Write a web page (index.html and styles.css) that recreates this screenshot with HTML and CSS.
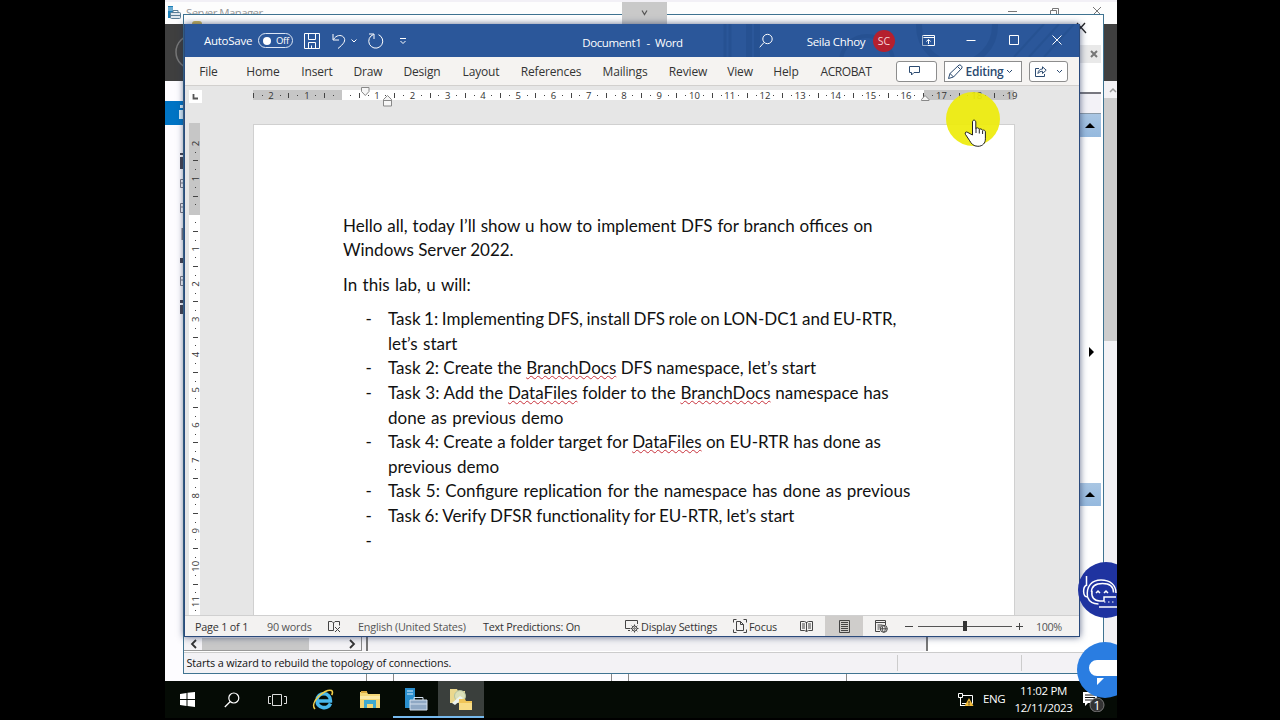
FILE: index.html
```html
<!DOCTYPE html>
<html lang="en">
<head>
<meta charset="utf-8">
<title>Document1 - Word</title>
<link rel="stylesheet" href="styles.css">
</head>
<body>
<div class="desktop">

  <div class="manager">
    <div class="manager-title">
      <svg width="14" height="14" viewBox="0 0 14 14"><path d="M1 0h5v12H1z" fill="#1b7fb8"/><path d="M1 2h5M1 4h5" stroke="#fff" stroke-width=".7"/><rect x="3.500" y="6.500" width="10" height="6" rx="1" fill="#dfe7ee" stroke="#5a7d95"/><path d="M6 6V4.500h5V6M3.500 9.500h10" stroke="#5a7d95" fill="none"/></svg>
      <span class="manager-name">Server Manager</span>
      <svg class="manager-controls" width="100" height="14" viewBox="0 0 100 14" fill="none" stroke="#777"><path d="M5 5.500h9M47.500 4.500h6v6h-6zM49.500 4.500v-2h6v6h-2M90 1l8 8M98 1l-8 8"/></svg>
    </div>
    <div class="manager-band"><svg width="60" height="57" viewBox="0 0 60 57"><circle cx="28" cy="28" r="17" fill="none" stroke="#777" stroke-width="1.500"/></svg></div>
    <div class="manager-body">
      <div class="manager-nav">
        <div class="nav-active"><svg width="19" height="24" viewBox="0 0 19 24"><path d="M15 4h4v3h-4zM14 9h5v9h-5z" fill="#d5ecfa"/></svg></div>
        <svg width="19" height="200" viewBox="0 0 19 200"><g fill="#454552"><path d="M15 28h4v2h-4zM15 32h4v12h-4zM15 133h4v5h-4zM15 175h4v3h-4zM15 180h4v9h-4z"/><path d="M16.500 103h2.500v12h-2.500z" opacity=".7"/></g><g fill="none" stroke="#777785"><path d="M19 54.500h-3.500v8H19M19 78.500h-3.500v9H19M19 151.500h-3.500v9H19M16 82h3M16 58h3M16 155h3"/></g></svg>
      </div>
      <div class="manager-scroll"><svg width="13" height="17" viewBox="0 0 13 17"><path d="M6 11l3-3 3 3" stroke="#999" fill="none" stroke-width="1.500"/></svg><div class="thumb"></div></div>
    </div>
  </div>

  <div class="console">
    <div class="console-icon"></div>
    <div class="console-side">
      <svg width="24" height="26" viewBox="0 0 24 26"><path d="M-2 8L7 18M6 8L-3 18" stroke="#222" stroke-width="1.300"/></svg>
      <div class="side-close"><svg width="8" height="8" viewBox="0 0 8 8"><path d="M1 1l6 6M7 1L1 7" stroke="#777" stroke-width="2"/></svg></div>
      <div class="side-gap"></div>
      <div class="side-rule"></div>
      <div class="side-head"><i class="up"></i></div>
      <div class="side-list"><i class="right"></i></div>
      <div class="side-head"><i class="up"></i></div>
    </div>
    <div class="console-bottom">
      <div class="hscroll"><svg width="18" height="12" viewBox="0 0 18 12"><path d="M12 2L8 6l4 4" fill="none" stroke="#333" stroke-width="1.800"/></svg><span class="hthumb"></span><svg width="18" height="12" viewBox="0 0 18 12"><path d="M7 2l4 4-4 4" fill="none" stroke="#333" stroke-width="1.800"/></svg></div>
      <div class="pane"></div>
      <div class="pane-last"></div>
    </div>
    <div class="console-status"><span class="hint">Starts a wizard to rebuild the topology of connections.</span><span class="cell"></span><span class="cell"></span></div>
  </div>
  <div class="pane-ends"><i></i><i></i><i></i><i></i><i></i></div>
  <div class="session-tab"><svg width="7" height="6" viewBox="0 0 7 6"><path d="M1 .5l2.500 4L6 .5" fill="none" stroke="#555" stroke-width="1.200"/></svg></div>

  <div class="word">
    <div class="titlebar">
      <svg class="title-art" width="380" height="33" viewBox="0 0 380 33" fill="none" stroke="#204a87"><g opacity=".4"><path d="M26 0v33M31 0v33" stroke-width="3"/><path d="M50 0v33M58 0v33" stroke-width="6"/><circle cx="168" cy="38" r="26" stroke-width="4"/><circle cx="258" cy="2" r="38" stroke-width="6"/><path d="M315 33l30-33M330 33l30-33M345 33l30-33" stroke-width="2"/></g></svg>
      <span class="autosave">AutoSave</span>
      <span class="toggle"><i></i>Off</span>
      <svg width="16" height="16" viewBox="0 0 16 16"><path d="M.5.500h15v15H.500zM4.500.500v6h7v-6M4.500 15.500v-6h7v6M7.500 15.500v-3" /></svg>
      <svg width="14" height="16" viewBox="0 0 14 16"><path d="M1 1v6h6M1.500 6.500C4 2 9 1.500 11.500 4c3 3.500 0 7-5.500 11.500"/></svg>
      <svg width="8" height="8" viewBox="0 0 8 8"><path d="M1.500 2.500L4 5l2.500-2.500"/></svg>
      <svg width="16" height="16" viewBox="0 0 16 16"><path d="M1 1h5v5M10.500 1.700a7 7 0 1 1-7.500 1.300L5.500 1.500"/></svg>
      <svg width="8" height="8" viewBox="0 0 8 8"><path d="M1 1.500h6M1.500 4L4 6.500 6.500 4"/></svg>
      <span></span>
      <span class="doc-name">Document1&nbsp; -&nbsp; Word</span>
      <svg width="14" height="16" viewBox="0 0 14 16"><circle cx="8.500" cy="6" r="4.700"/><path d="M5 9.500L.5 14.500"/></svg>
      <span></span>
      <span class="user">Seila Chhoy</span>
      <span class="avatar">SC</span>
      <svg width="13" height="11" viewBox="0 0 13 11"><path d="M.5.500h12v10H.500zM.500 2.500h12M6.500 9V4.500M4.300 6.500l2.200-2 2.200 2"/></svg>
      <svg width="10" height="11" viewBox="0 0 10 11"><path d="M.5 5.500h9"/></svg>
      <svg width="10" height="11" viewBox="0 0 10 11"><path d="M.5.500h9v9h-9z"/></svg>
      <svg width="10" height="11" viewBox="0 0 10 11"><path d="M.5.500l9 9M9.500.500l-9 9"/></svg>
    </div>

    <div class="tabs">
      <span>File</span><span>Home</span><span>Insert</span><span>Draw</span><span>Design</span><span>Layout</span><span>References</span><span>Mailings</span><span>Review</span><span>View</span><span>Help</span><span class="acrobat">ACROBAT</span>
      <div class="actions">
        <div class="btn comment"><svg width="11" height="10" viewBox="0 0 11 10"><path d="M.5.500h10v6H5L2.500 9V6.500h-2z"/></svg></div>
        <div class="btn editing"><svg width="15" height="15" viewBox="0 0 15 15"><path d="M.5 14.500l1.500-5L11 1c1-.8 3.800 1.500 3 3l-8.500 9zM2 9.500l3.500 3.500M9.500 2.500l3.200 3.200"/></svg><span>Editing</span><svg width="7" height="7" viewBox="0 0 7 7"><path d="M1 2l2.500 2.500L6 2"/></svg></div>
        <div class="btn share"><svg width="12" height="11" viewBox="0 0 12 11"><path d="M4 2.500H.500v8h9V8M3 7.500c0-3 2-4.500 4.500-4.500V.800l3.700 3.400-3.700 3.300V5.300C5.500 5.300 4 6 3 7.500z"/></svg><svg width="7" height="7" viewBox="0 0 7 7"><path d="M1 2l2.500 2.500L6 2"/></svg></div>
      </div>
    </div>

    <div class="ruler-row">
      <div class="corner"><svg width="13" height="13" viewBox="0 0 13 13"><path d="M4.500 4v4.500H9" fill="none" stroke="#555" stroke-width="1.800"/></svg></div>
      <svg class="hruler" width="768" height="24" viewBox="0 0 768 24">
        <path d="M0 0h761v10H0z" fill="#c6c6c6"/><path d="M89 0h582v10H89z" fill="#fff"/>
        <g class="marks"><path d="M.200 5H752" stroke-width="5" stroke-dasharray="1 34.270"/><path d="M9 5.500H752" stroke-dasharray="1 16.635"/></g>
        <g class="nums">
          <text x="18" y="8.500">2</text><text x="54" y="8.500">1</text><text x="124" y="8.500">1</text><text x="159.400" y="8.500">2</text><text x="194.600" y="8.500">3</text><text x="229.900" y="8.500">4</text><text x="265.200" y="8.500">5</text><text x="300.400" y="8.500">6</text><text x="335.700" y="8.500">7</text><text x="371" y="8.500">8</text><text x="406.200" y="8.500">9</text><text x="441.500" y="8.500">10</text><text x="476.800" y="8.500">11</text><text x="512" y="8.500">12</text><text x="547.300" y="8.500">13</text><text x="582.600" y="8.500">14</text><text x="617.800" y="8.500">15</text><text x="653" y="8.500">16</text><text x="688.400" y="8.500">17</text><text x="723.700" y="8.500">18</text><text x="759" y="8.500">19</text>
        </g>
        <g fill="#f6f6f6" stroke="#888"><path d="M108.500-2.500h7.500v4l-3.700 4-3.800-4z"/><path d="M130.500 9.500l4-4 4 4v6.500h-8zM130.500 10.500h8"/><path d="M668.500 10.500v-1l3.500-4 4 4v1h-7.500z"/></g>
      </svg>
    </div>
    <div class="workspace">
      <svg class="vruler" width="11" height="492" viewBox="0 0 11 492">
        <path d="M0 0h11v92H0z" fill="#c6c6c6"/><path d="M0 92h11v400H0z" fill="#fff"/>
        <g class="marks"><path d="M6 37.300V492" stroke-width="5" stroke-dasharray="1 34.270"/><path d="M6.500 28.500V492" stroke-dasharray="1 16.635"/></g>
        <g class="nums">
          <text transform="translate(9.500 20.500) rotate(-90)">2</text><text transform="translate(9.500 55.500) rotate(-90)">1</text><text transform="translate(9.500 125.800) rotate(-90)">1</text><text transform="translate(9.500 161) rotate(-90)">2</text><text transform="translate(9.500 196.300) rotate(-90)">3</text><text transform="translate(9.500 231.500) rotate(-90)">4</text><text transform="translate(9.500 266.900) rotate(-90)">5</text><text transform="translate(9.500 302.100) rotate(-90)">6</text><text transform="translate(9.500 337.400) rotate(-90)">7</text><text transform="translate(9.500 372.700) rotate(-90)">8</text><text transform="translate(9.500 407.900) rotate(-90)">9</text><text transform="translate(9.500 443.200) rotate(-90)">10</text><text transform="translate(9.500 478.500) rotate(-90)">11</text>
        </g>
      </svg>
      <div class="page">
        <p><span class="loose">Hello all, today I’ll show u how to implement DFS for branch offices on</span><br>Windows Server 2022.</p>
        <p class="looser">In this lab, u will:</p>
        <ul>
          <li><span class="tight">Task 1: Implementing DFS, install DFS role on LON-DC1 and EU-RTR,</span><br><span class="looser">let’s start</span></li>
          <li>Task 2: Create the <u>BranchDocs</u> DFS namespace, let’s start</li>
          <li><span class="ease">Task 3: Add the <u>DataFiles</u> folder to the <u>BranchDocs</u> namespace has</span><br><span class="looser">done as previous demo</span></li>
          <li>Task 4: Create a folder target for <u>DataFiles</u> on EU-RTR has done as<br><span class="looser">previous demo</span></li>
          <li><span class="open">Task 5: Configure replication for the namespace has done as previous</span></li>
          <li><span class="snug">Task 6: Verify DFSR functionality for EU-RTR, let’s start</span></li>
          <li>&nbsp;</li>
        </ul>
      </div>
    </div>

    <div class="statusbar">
      <span class="dark">Page 1 of 1</span><span>90 words</span>
      <svg width="14" height="14" viewBox="0 0 14 14"><path d="M6.500 11.500H1.500v-9h3.500l1.500 1.500L8 2.500h4.500v4M6.500 4v7.500M8 8l5 5M13 8l-5 5"/></svg>
      <span class="lang">English (United States)</span><span class="dark">Text Predictions: On</span>
      <svg width="14" height="14" viewBox="0 0 14 14"><path d="M5 9.500H.500v-8h12V5M3 11.500h2"/><circle cx="9.500" cy="9.500" r="2.500"/><circle cx="9.500" cy="9.500" r=".8"/><path d="M9.500 5.500V7M9.500 12v1.500M5.500 9.500H7M12 9.500h1.500M6.700 6.700l1 1M11.300 11.300l1 1M12.300 6.700l-1 1M6.700 12.300l1-1"/></svg>
      <span class="dark">Display Settings</span>
      <svg width="14" height="14" viewBox="0 0 14 14"><path d="M.5 3.500v-3h3M10.500.500h3v3M.500 10.500v3h3M10.500 13.500h3v-3M3.500 2.500h4l3 3v6h-7zM7.500 2.500v3h3"/></svg>
      <span class="dark">Focus</span>
      <span class="view"><svg width="13" height="12" viewBox="0 0 13 12"><path d="M6.500 2v9.500M.500 1.500h4l2 1 2-1h4v9h-4l-2 1-2-1h-4zM2 4h3M2 6h3M2 8h3M8 4h3M8 6h3M8 8h3"/></svg></span>
      <span class="view on"><svg width="11" height="13" viewBox="0 0 11 13"><path d="M.5.500h10v12H.500zM2 2.500h7M2 4.500h7M2 6.500h7M2 8.500h7M2 10.500h7"/></svg></span>
      <span class="view"><svg width="13" height="13" viewBox="0 0 13 13"><path d="M5 11.500H.500V.500h10V5M.500 2.500h10M2.500 5h5M2.500 7h3M2.500 9h2"/><circle cx="8.800" cy="8.800" r="3.500"/><path d="M5.300 8.800h7M8.800 5.300c-2 2-2 5 0 7M8.800 5.300c2 2 2 5 0 7"/></svg></span>
      <svg width="17" height="11" viewBox="0 0 17 11"><path d="M5 5.500h8"/></svg>
      <span class="slider"><i></i></span>
      <svg width="12" height="11" viewBox="0 0 12 11"><path d="M3 5.500h7M6.500 2v7"/></svg>
      <span class="zoom">100%</span>
    </div>
  </div>

  <div class="halo"></div>
  <svg class="pointer" width="54" height="56" viewBox="0 0 54 56"><path d="M26.500 43V30c0-2.500 3-2.500 3.300 0v6.500c1-1.200 3-.8 3.300.8 1-.8 3-.4 3.300 1 1.300-.6 3 .1 3 1.500v7c0 4-2.500 7.500-7.500 7.500-4.500 0-6.500-2.500-8.500-6l-4-6c-1-2 1-3 2.500-1.800z" fill="#fff" stroke="#222"/><path d="M30 36v5M33.300 37.500v4M36.600 39v3" stroke="#222"/></svg>

  <svg class="bot" width="56" height="56" viewBox="0 0 56 56"><circle cx="28" cy="28" r="28" fill="#1f33a0"/><g fill="none" stroke="#fff" stroke-width="1.500"><path d="M8.500 14v10M8.500 23c-4 2-4 12 1 12M9.500 35C8 24 14 18 23 18c9 0 15 5 15 13M13.500 30c0-6 4-8.500 11-8.500s11 3 11 9M9.500 35c1.500 4 5 7 11 7M14 29c-1 6 2 10 8 10h4v-4h12M21 45h18"/><path d="M18 31l2-2 2 2M26 31l2-2 2 2"/></g><path d="M26 40h1.500M30 40h1.500M34 40h1.500" stroke="#fff"/></svg>
  <svg class="chat" width="56" height="56" viewBox="0 0 56 56"><circle cx="28" cy="28" r="28" fill="#2a7de1"/><path d="M20 18h36v16H20a8 8 0 0 1 0-16zM20 36h7l-7 7z" fill="#fff"/></svg>

  <div class="taskbar">
    <div class="task"><svg width="15" height="15" viewBox="0 0 15 15" fill="#fff"><path d="M0 2l6.500-1v6H0zM7.500.800L15 0v7H7.500zM0 8h6.500v6L0 13zM7.500 8H15v7l-7.500-1z"/></svg></div>
    <div class="task"><svg width="16" height="16" viewBox="0 0 16 16" fill="none" stroke="#fff" stroke-width="1.200"><circle cx="9.800" cy="6" r="5"/><path d="M6.300 9.500L.800 15"/></svg></div>
    <div class="task"><svg width="19" height="14" viewBox="0 0 19 14" fill="none" stroke="#ddd"><path d="M4.500 1.500h9v11h-9zM3 3.500H.500v7H3M16 3.500h2.500v7H16"/></svg></div>
    <div class="task"><svg width="22" height="22" viewBox="0 0 22 22" fill="none"><path d="M18.500 14.500c-3 6.500-13.500 5-13.500-3 0-9 14-9 13.500.500H6" stroke="#48b8ec" stroke-width="3.500"/><path d="M3 20C-3 14 13-1 19.500 1.500c1.500.7 1 3 .2 4.500" stroke="#f2cf4a" stroke-width="1.600"/></svg></div>
    <div class="task"><svg width="20" height="17" viewBox="0 0 20 17"><path d="M0 1h7l1 2h12v14H0z" fill="#f3d676"/><path d="M1 0h6v2H1z" fill="#d9a93c"/><path d="M0 5h20v3H0z" fill="#fbe9a5"/><path d="M4 9h12v8h-3v-4H7v4H4z" fill="#3fa9cf"/></svg></div>
    <div class="task run"><svg width="24" height="24" viewBox="0 0 24 24"><path d="M1 0h10v20H1z" fill="#2a8fce"/><path d="M3 3h6M3 6h6" stroke="#d9f0ff" stroke-width="1.200"/><path d="M6 12h17v10H6z" fill="#8fa8c4" stroke="#d4e0ee"/><path d="M10 12V9.500h9V12M6 16h17" fill="none" stroke="#d4e0ee"/></svg></div>
    <div class="task run on"><svg width="24" height="23" viewBox="0 0 24 23"><path d="M1 1h7l1 2h7v12H1z" fill="#ead88e"/><circle cx="11" cy="8" r="5.500" fill="#dbe0b8" stroke="#b5c3a0"/><path d="M3 15l8-7 3 2-8 7z" fill="#edf3ee"/><path d="M10 11h6l1 2h6v9H10z" fill="#f0c558"/><path d="M10 15h13v7H10z" fill="#f8dc86"/></svg></div>
    <div class="tray">
      <svg width="16" height="14" viewBox="0 0 16 14"><path d="M4 2.500h10.500v8H4M2 12.500h6M.500.500h4v4h-4zM2.500 4.500v8" fill="none" stroke="#fff"/><path d="M11 5l4.500 8h-9z" fill="#f3bd3c"/><path d="M11 8v2.500M11 11.300v1" stroke="#222"/></svg>
      <span class="eng">ENG</span>
      <span class="clock">11:02 PM<br>12/11/2023</span>
      <svg width="24" height="24" viewBox="0 0 24 24"><path d="M1 4h14v11H6l-3 3v-3H1z" fill="#fff"/><path d="M3 7h10M3 9.500h10M3 12h7" stroke="#111"/><circle cx="15" cy="17" r="7" fill="#333" stroke="#777"/><text x="15" y="21.500" class="badge">1</text></svg>
    </div>
  </div>
</div>
</body>
</html>
```

FILE: styles.css
```css
* { box-sizing: border-box; }
body { margin: 0; width: 1280px; height: 720px; background: #000; overflow: hidden; font-family: "Open Sans", "Noto Sans", sans-serif; }
.desktop { position: relative; width: 952px; height: 718px; margin-left: 165px; overflow: hidden; background: #fff; }
svg { display: block; flex: none; }

/* Server Manager, rear window */
.manager { display: flex; flex-direction: column; height: 681px; background: #fdfcff; }
.manager-title { display: flex; align-items: center; height: 24px; padding-left: 2px; border-top: 2px solid #f2f0f6; background: #fdfdfd; color: #999; font-size: 11.500px; }
.manager-name { margin-left: 5px; margin-top: -1px; letter-spacing: -.6px; }
.manager-controls { margin-left: auto; margin-right: 14px; }
.manager-band { height: 57px; background: #3f3f3f; }
.manager-body { display: flex; justify-content: space-between; flex: 1; }
.manager-nav { width: 19px; padding-top: 20px; }
.nav-active { height: 24px; background: #0074c4; }
.manager-scroll { width: 13px; background: #f3f2f5; }
.thumb { height: 243px; background: #cdcdcd; }

/* DFS console */
.console { position: absolute; left: 18px; top: 14px; width: 921px; height: 660px; display: flex; flex-direction: column; border: 1px solid #3f7391; background: #fff; }
.console-icon { position: absolute; left: 8px; top: 6px; width: 10px; height: 5px; background: #c9b45a; border-radius: 3px 3px 0 0; }
.console-side { flex: none; align-self: flex-end; width: 24px; height: 622px; display: flex; flex-direction: column; }
.console-side > svg { overflow: visible; }
.side-close { display: flex; align-items: center; justify-content: center; height: 18px; width: 22px; margin-top: 4px; background: #e9e9e9; padding-left: 8px; }
.side-gap { height: 31px; width: 22px; border-bottom: 2px solid #77777f; }
.side-rule { height: 20px; width: 22px; background: #f3f2f7; border-bottom: 1px solid #8a9aa8; }
.side-head { height: 23px; width: 22px; display: flex; align-items: center; justify-content: center; background: linear-gradient(#a9c6e3, #95b9de); }
.side-list { height: 346px; width: 22px; padding: 210px 0 0 10px; }
.up { border: 5px solid transparent; border-top: 0; border-bottom-color: #000; }
.right { display: block; width: 0; border: 5px solid transparent; border-right: 0; border-left-color: #000; }
.console-bottom { flex: none; display: flex; height: 14px; background: #f3f2f5; }
.hscroll { display: flex; align-items: center; width: 178px; border-right: 1px solid #888; border-bottom: 1px solid #999; }
.hthumb { width: 107px; height: 12px; background: #c8c8c8; margin-right: 34px; }
.pane { width: 562px; margin-left: 4px; border-left: 2px solid #777; border-right: 2px solid #777; }
.pane-last { flex: 1; background: #fff; }
.console-status { display: flex; flex: 1; margin-top: 1px; border-top: 1px solid #ccc; background: #f3f2f5; font-size: 10.800px; line-height: 20px; white-space: nowrap; }
.hint { flex: none; width: 713px; padding-left: 2.500px; letter-spacing: -.12px; color: #111; }
.cell { flex: none; width: 124px; margin: 2px 0; border-left: 1px solid #ccc; }
.pane-ends { position: absolute; left: 0; top: 674px; display: flex; height: 7px; }
.pane-ends i { border-right: 1px solid #888; }
.pane-ends i:nth-child(1) { width: 202px; }
.pane-ends i:nth-child(2) { width: 27px; }
.pane-ends i:nth-child(3) { width: 218px; }
.pane-ends i:nth-child(4) { width: 17px; }
.pane-ends i:nth-child(5) { width: 218px; }
.session-tab { position: absolute; left: 457px; top: 2px; width: 45px; height: 22px; display: flex; align-items: center; justify-content: center; background: #c9c9c9; }

/* Word window */
.word { position: absolute; left: 19px; top: 24px; width: 896px; height: 613px; display: flex; flex-direction: column; border: 1px solid #2a4a7c; border-top: 0; background: #e6e6e6; box-shadow: 0 0 7px rgba(30, 45, 90, .7); white-space: nowrap; }
.titlebar { position: relative; display: grid; grid-template-columns: 58px 37px 36px 17px 13px 32px 21px 101px 237px 29px 20px 72px 24px 64px 22px 64px 22px; align-items: center; justify-items: center; height: 33px; padding-left: 14px; background: #2b579a; color: #fff; font-size: 11.500px; fill: none; stroke: #fff; }
.titlebar span { stroke: none; z-index: 1; }
.title-art { position: absolute; right: 0; top: 0; }
.autosave { letter-spacing: -.25px; }
.toggle { display: flex; align-items: center; gap: 5px; width: 35px; height: 15px; padding-left: 4px; border: 1px solid #dce6f5; border-radius: 8px; font-size: 9.500px; letter-spacing: -.3px; }
.toggle i { width: 8px; height: 8px; border-radius: 50%; background: #fff; }
.doc-name { padding-top: 3px; letter-spacing: -.4px; }
.user { letter-spacing: -.3px; padding-top: 2px; }
.avatar { width: 22px; height: 22px; border-radius: 50%; background: #b5202e; color: #f5d5d8; text-align: center; line-height: 22px; font-size: 10.500px; }
.tabs { display: grid; grid-template-columns: 47px 62px 46px 56px 52px 66px 74px 74px 52px 52px 40px 80px 1fr; align-items: center; height: 28px; background: #f5f3f1; color: #333; font-size: 12px; }
.tabs > span { display: flex; justify-content: center; letter-spacing: -.15px; }
.tabs > .acrobat { letter-spacing: -.4px; }
.actions { display: flex; gap: 7px; padding-left: 10px; }
.btn { display: flex; align-items: center; justify-content: center; height: 21px; border: 1px solid #8d8d8d; border-radius: 3px; background: #fff; color: #2b4a70; fill: none; stroke: #2b4a70; }
.btn span { stroke: none; }
.comment { width: 41px; padding-right: 4px; }
.editing { width: 78px; gap: 3px; border-radius: 0; padding-right: 5px; font-weight: 600; letter-spacing: -.3px; }
.share { width: 39px; gap: 9px; }
.ruler-row { display: flex; height: 38px; padding: 5px 0 0 4px; border-top: 1px solid #d2d0ce; }
.corner { width: 13px; height: 13px; background: #fff; margin-right: 51px; margin-top: -1px; }
.hruler { overflow: visible; margin-top: -1px; }
.marks { stroke: #444; fill: none; shape-rendering: crispEdges; }
.nums { fill: #333; font: 9.500px "Open Sans", sans-serif; text-anchor: middle; }
.workspace { display: flex; height: 492px; padding-left: 4px; }
.page { width: 762px; height: 491px; margin: 1px 0 0 53px; padding: 88.500px 0 0 89px; background: #fff; border: 1px solid #d0d0d0; border-bottom: 0; color: #111; font: 17px/24.600px Lato, "Open Sans", sans-serif; }
.page p { margin: 0 0 10px; }
.page ul { margin: 0; padding: 0; list-style: none; }
.page li { padding-left: 45px; }
.page li::before { content: "-"; float: left; margin-left: -22.500px; }
.page u { text-decoration: underline wavy #c8323c 1px; text-underline-offset: 1px; text-decoration-skip-ink: none; }
.ease { word-spacing: .4px; }
.loose { word-spacing: .6px; }
.open { word-spacing: .95px; }
.looser { word-spacing: 1.100px; }
.snug { word-spacing: -.3px; }
.tight { word-spacing: -.8px; }
.statusbar { display: grid; grid-template-columns: 72px 60px 31px 125px 142px 16px 92px 16px 39px 37px 38px 37px 17px 96px 23px 40px; align-items: center; height: 21px; padding-left: 10px; border-top: 1px solid #d0d0d0; background: #f3f2f1; color: #555; font-size: 10.800px; fill: none; stroke: #444; }
.statusbar span { stroke: none; letter-spacing: -.2px; }
.statusbar .dark { color: #333; }
.statusbar .view { display: flex; align-items: center; justify-content: center; height: 20px; stroke: #444; }
.statusbar .on { background: #cfcdcb; }
.statusbar .zoom { letter-spacing: -.4px; }
.slider { display: flex; align-items: center; justify-content: center; height: 12px; background: linear-gradient(#555, #555) center / 94px 1px no-repeat; }
.slider i { width: 4px; height: 10px; background: #333; }

.halo { position: absolute; left: 781px; top: 92px; width: 54px; height: 54px; border-radius: 50%; background: #eeeb0a; opacity: .92; }
.pointer { position: absolute; left: 781px; top: 92px; }
.bot { position: absolute; left: 913px; top: 562px; }
.chat { position: absolute; left: 912px; top: 642px; z-index: 1; }

.taskbar { position: absolute; left: 0; top: 681px; width: 952px; height: 37px; display: flex; background: #050b05; color: #fff; }
.task { display: flex; align-items: center; justify-content: center; width: 46.200px; }
.task:first-child { width: 44px; }
.task:nth-child(2) { width: 45.200px; }
.run { border-bottom: 2px solid #76b9ed; border-top: 2px solid transparent; width: 45.500px; }
.run.on { background: #3a3f3c; border-top-color: #3a3f3c; }
.tray { display: flex; align-items: center; margin-left: auto; font-size: 11.500px; line-height: 16.500px; }
.eng { margin-left: 9px; letter-spacing: -.5px; }
.clock { width: 77px; text-align: center; letter-spacing: -.3px; }
.tray svg:last-child { margin-right: 11px; }
.badge { fill: #fff; font: 13px "Open Sans", sans-serif; text-anchor: middle; }
```
